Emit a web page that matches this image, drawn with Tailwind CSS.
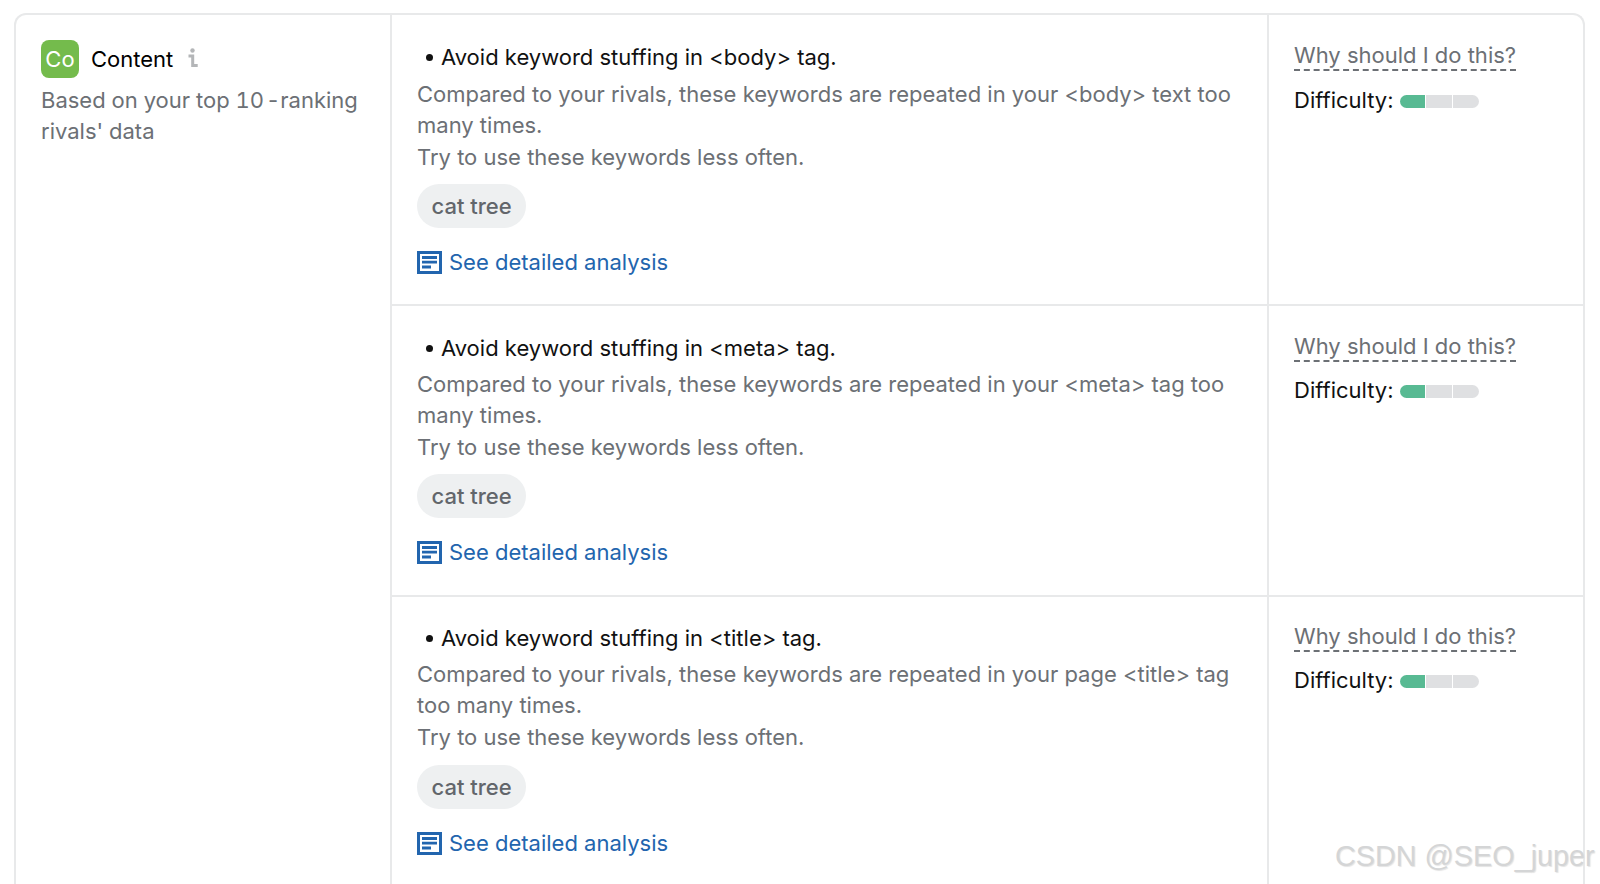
<!DOCTYPE html>
<html><head><meta charset="utf-8"><script src="https://cdn.jsdelivr.net/npm/@tailwindcss/browser@4"></script></head>
<body class="bg-white overflow-hidden font-['Inter',sans-serif]">
<div class="relative h-[884px] w-[1600px] overflow-hidden pl-[14px] pr-[15px] pt-[13px]">
  <div class="flex h-[900px] rounded-t-[12px] border-x-2 border-t-2 border-[#e8e9ea]">
    <div class="w-[376px] shrink-0 border-r-2 border-[#e8e9ea] pl-[25px] pr-[20px] pt-[25px]">
      <div class="flex items-center h-[38px]">
        <div class="flex h-[38px] w-[38px] items-center justify-center rounded-[8px] bg-[#74bb4c] text-[22px] text-white">Co</div>
        <span class="ml-[12px] text-[22px] text-black">Content</span>
        <svg class="ml-[15px] mb-[2px]" width="10" height="20" viewBox="0 0 10 20"><circle cx="4.5" cy="2.5" r="2.2" fill="#b4b6b8"/><path d="M0.5 8h4.2v9.5h5" fill="none" stroke="#b4b6b8" stroke-width="3"/></svg>
      </div>
      <p class="mt-[7px] text-[22px] leading-[31px] text-[#6c7075] tabular-nums">Based on your top 10&#8202;-ranking rivals' data</p>
    </div>
    <div class="flex-1 min-w-0">

      <div class="flex h-[291px] border-b-2 border-[#e8e9ea]">
        <div class="flex-1 border-r-2 border-[#e8e9ea] pl-[25px] pt-[27px]">
          <div class="flex items-center text-[22px] leading-[31px] text-[#111]"><span class="ml-[9px] mr-[8px] h-[7px] w-[7px] rounded-full bg-[#111]"></span>Avoid keyword stuffing in &lt;body&gt; tag.</div>
          <p class="mt-[6px] text-[22px] leading-[31.4px] text-[#6c7075]">Compared to your rivals, these keywords are repeated in your &lt;body&gt; text too many times.<br>Try to use these keywords less often.</p>
          <div class="mt-[11px] inline-flex h-[44px] items-center rounded-full bg-[#eef0f1] px-[14.5px] text-[22px] font-medium text-[#62666b]">cat tree</div>
          <a class="mt-[19px] flex items-center text-[22px] leading-[31px] text-[#2265ae]">
            <svg class="mr-[7px]" width="25" height="23" viewBox="0 0 25 23"><rect x="1.5" y="1.5" width="22" height="20" fill="none" stroke="#2265ae" stroke-width="3"/><path d="M5 6.5h15M5 11.2h15M5 16h9" stroke="#2265ae" stroke-width="2.8"/></svg>See detailed analysis</a>
        </div>
        <div class="w-[314px] shrink-0 pl-[25px] pt-[26px]">
          <span class="inline-block border-b-2 border-dashed border-[#6c7075] text-[22px] leading-[28px] text-[#6c7075]">Why should I do this?</span>
          <div class="mt-[14px] flex items-center text-[22px] leading-[31px] text-[#111]">Difficulty:
            <div class="ml-[6px] mt-[2px] flex h-[13px] w-[79px] gap-[1.5px] overflow-hidden rounded-full"><div class="flex-1 bg-[#58ba93]"></div><div class="flex-1 bg-[#dfe0e2]"></div><div class="flex-1 bg-[#dfe0e2]"></div></div></div>
        </div>
      </div>

      <div class="flex h-[291px] border-b-2 border-[#e8e9ea]">
        <div class="flex-1 border-r-2 border-[#e8e9ea] pl-[25px] pt-[27px]">
          <div class="flex items-center text-[22px] leading-[31px] text-[#111]"><span class="ml-[9px] mr-[8px] h-[7px] w-[7px] rounded-full bg-[#111]"></span>Avoid keyword stuffing in &lt;meta&gt; tag.</div>
          <p class="mt-[5px] text-[22px] leading-[31.4px] text-[#6c7075]">Compared to your rivals, these keywords are repeated in your &lt;meta&gt; tag too many times.<br>Try to use these keywords less often.</p>
          <div class="mt-[11px] inline-flex h-[44px] items-center rounded-full bg-[#eef0f1] px-[14.5px] text-[22px] font-medium text-[#62666b]">cat tree</div>
          <a class="mt-[19px] flex items-center text-[22px] leading-[31px] text-[#2265ae]">
            <svg class="mr-[7px]" width="25" height="23" viewBox="0 0 25 23"><rect x="1.5" y="1.5" width="22" height="20" fill="none" stroke="#2265ae" stroke-width="3"/><path d="M5 6.5h15M5 11.2h15M5 16h9" stroke="#2265ae" stroke-width="2.8"/></svg>See detailed analysis</a>
        </div>
        <div class="w-[314px] shrink-0 pl-[25px] pt-[26px]">
          <span class="inline-block border-b-2 border-dashed border-[#6c7075] text-[22px] leading-[28px] text-[#6c7075]">Why should I do this?</span>
          <div class="mt-[13px] flex items-center text-[22px] leading-[31px] text-[#111]">Difficulty:
            <div class="ml-[6px] mt-[2px] flex h-[13px] w-[79px] gap-[1.5px] overflow-hidden rounded-full"><div class="flex-1 bg-[#58ba93]"></div><div class="flex-1 bg-[#dfe0e2]"></div><div class="flex-1 bg-[#dfe0e2]"></div></div></div>
        </div>
      </div>

      <div class="flex h-[320px]">
        <div class="flex-1 border-r-2 border-[#e8e9ea] pl-[25px] pt-[26px]">
          <div class="flex items-center text-[22px] leading-[31px] text-[#111]"><span class="ml-[9px] mr-[8px] h-[7px] w-[7px] rounded-full bg-[#111]"></span>Avoid keyword stuffing in &lt;title&gt; tag.</div>
          <p class="mt-[5px] text-[22px] leading-[31.4px] text-[#6c7075]">Compared to your rivals, these keywords are repeated in your page &lt;title&gt; tag too many times.<br>Try to use these keywords less often.</p>
          <div class="mt-[12px] inline-flex h-[44px] items-center rounded-full bg-[#eef0f1] px-[14.5px] text-[22px] font-medium text-[#62666b]">cat tree</div>
          <a class="mt-[19px] flex items-center text-[22px] leading-[31px] text-[#2265ae]">
            <svg class="mr-[7px]" width="25" height="23" viewBox="0 0 25 23"><rect x="1.5" y="1.5" width="22" height="20" fill="none" stroke="#2265ae" stroke-width="3"/><path d="M5 6.5h15M5 11.2h15M5 16h9" stroke="#2265ae" stroke-width="2.8"/></svg>See detailed analysis</a>
        </div>
        <div class="w-[314px] shrink-0 pl-[25px] pt-[25px]">
          <span class="inline-block border-b-2 border-dashed border-[#6c7075] text-[22px] leading-[28px] text-[#6c7075]">Why should I do this?</span>
          <div class="mt-[13px] flex items-center text-[22px] leading-[31px] text-[#111]">Difficulty:
            <div class="ml-[6px] mt-[2px] flex h-[13px] w-[79px] gap-[1.5px] overflow-hidden rounded-full"><div class="flex-1 bg-[#58ba93]"></div><div class="flex-1 bg-[#dfe0e2]"></div><div class="flex-1 bg-[#dfe0e2]"></div></div></div>
        </div>
      </div>
    </div>
  </div>
  <div class="absolute left-[1335px] top-[838px] whitespace-nowrap font-['Liberation_Sans',sans-serif] text-[28.8px] leading-[36px] text-[#d4d5d6] [text-shadow:1px_1px_1px_#e4e4e4]">CSDN @SEO_juper</div>
</div>
</body></html>
